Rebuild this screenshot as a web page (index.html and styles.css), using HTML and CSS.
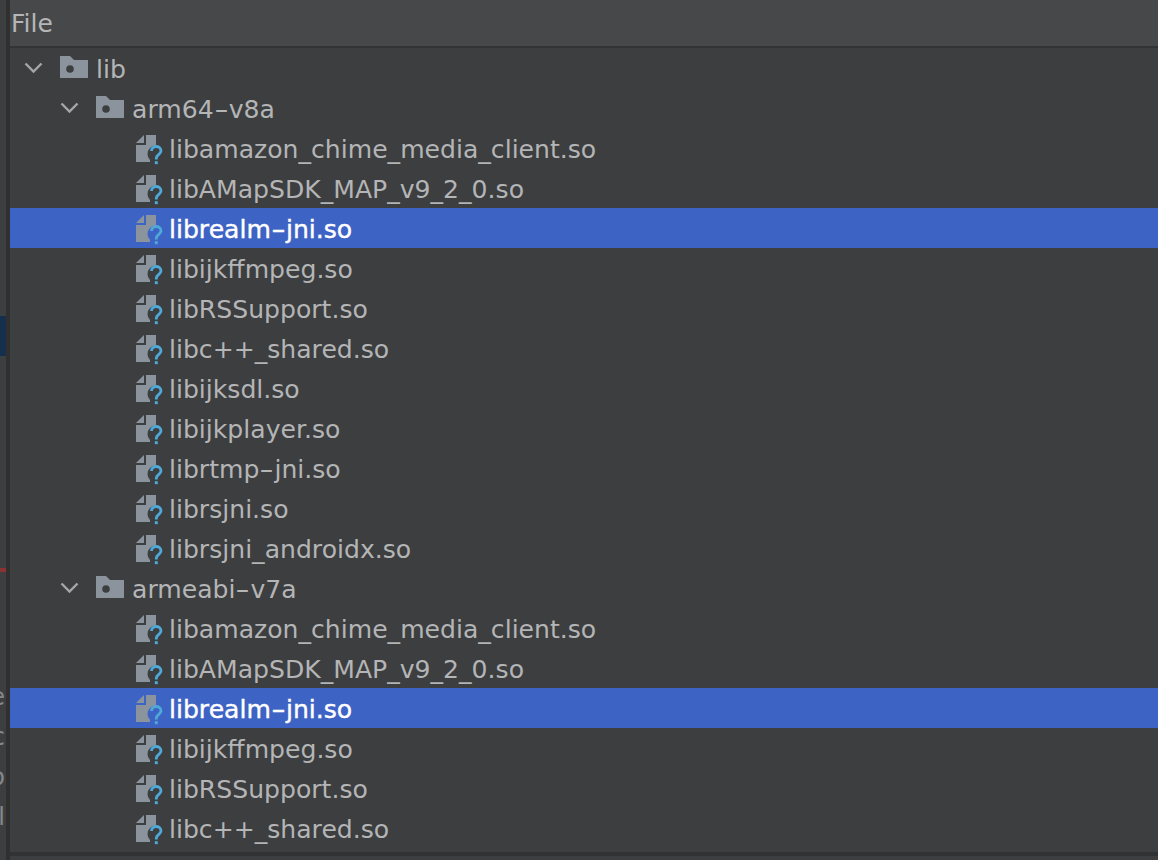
FILE: index.html
```html
<!DOCTYPE html>
<html lang="en">
<head>
<meta charset="utf-8">
<title>File</title>
<link rel="stylesheet" href="styles.css">
</head>
<body>
<svg class="defs" width="0" height="0" aria-hidden="true">
  <defs>
    <symbol id="chev" viewBox="0 0 20 14"><path d="M1.500 2.500 9.500 10.500l8-8" fill="none" stroke="#a4a7a9" stroke-width="2.400"/></symbol>
    <symbol id="folder" viewBox="0 0 28 22"><path d="M0 0h10l4 4h14v18H0z" fill="#8b949d"/><circle cx="10" cy="13" r="3.800" fill="#3d3e40"/></symbol>
    <symbol id="file" viewBox="0 0 28 32">
      <path d="M0 9 8 1v8z" fill="#8b949d"/>
      <path d="M10 1h10v27H0V11h10z" fill="#8b949d"/>
      <circle class="halo" cx="20" cy="20" r="8.500"/>
      <path class="halo" d="M14 24h12v8H14z"/>
      <path d="M15.500 17c0-6 9.500-6 9.500 0 0 3.500-4.700 3.500-4.700 7.500v1" fill="none" stroke="#4ea8d8" stroke-width="2.800"/>
      <path d="M18.800 27.200h3v3h-3z" fill="#4ea8d8"/>
    </symbol>
  </defs>
</svg>
<div class="app">
  <aside class="strip">
    <div class="mark-blue"></div>
    <div class="mark-red"></div>
    <div class="frags">
      <div class="frag">e</div>
      <div class="frag">c</div>
      <div class="frag">o</div>
      <div class="frag">pl</div>
    </div>
  </aside>
  <main class="panel">
    <header class="head">File</header>
    <ul class="tree">
      <li class="row d0"><svg class="chev"><use href="#chev"/></svg><svg class="folder"><use href="#folder"/></svg><span class="name">lib</span></li>
      <li class="row d1"><svg class="chev"><use href="#chev"/></svg><svg class="folder"><use href="#folder"/></svg><span class="name">arm64<span class="hy">-</span>v8a</span></li>
      <li class="row d2"><svg class="file"><use href="#file"/></svg><span class="name">libamazon_chime_media_client.so</span></li>
      <li class="row d2"><svg class="file"><use href="#file"/></svg><span class="name">libAMapSDK_MAP_v9_2_0.so</span></li>
      <li class="row d2 sel"><svg class="file"><use href="#file"/></svg><span class="name">librealm<span class="hy">-</span>jni.so</span></li>
      <li class="row d2"><svg class="file"><use href="#file"/></svg><span class="name">libijkffmpeg.so</span></li>
      <li class="row d2"><svg class="file"><use href="#file"/></svg><span class="name">libRSSupport.so</span></li>
      <li class="row d2"><svg class="file"><use href="#file"/></svg><span class="name">libc++_shared.so</span></li>
      <li class="row d2"><svg class="file"><use href="#file"/></svg><span class="name">libijksdl.so</span></li>
      <li class="row d2"><svg class="file"><use href="#file"/></svg><span class="name">libijkplayer.so</span></li>
      <li class="row d2"><svg class="file"><use href="#file"/></svg><span class="name">librtmp<span class="hy">-</span>jni.so</span></li>
      <li class="row d2"><svg class="file"><use href="#file"/></svg><span class="name">librsjni.so</span></li>
      <li class="row d2"><svg class="file"><use href="#file"/></svg><span class="name">librsjni_androidx.so</span></li>
      <li class="row d1"><svg class="chev"><use href="#chev"/></svg><svg class="folder"><use href="#folder"/></svg><span class="name">armeabi<span class="hy">-</span>v7a</span></li>
      <li class="row d2"><svg class="file"><use href="#file"/></svg><span class="name">libamazon_chime_media_client.so</span></li>
      <li class="row d2"><svg class="file"><use href="#file"/></svg><span class="name">libAMapSDK_MAP_v9_2_0.so</span></li>
      <li class="row d2 sel"><svg class="file"><use href="#file"/></svg><span class="name">librealm<span class="hy">-</span>jni.so</span></li>
      <li class="row d2"><svg class="file"><use href="#file"/></svg><span class="name">libijkffmpeg.so</span></li>
      <li class="row d2"><svg class="file"><use href="#file"/></svg><span class="name">libRSSupport.so</span></li>
      <li class="row d2"><svg class="file"><use href="#file"/></svg><span class="name">libc++_shared.so</span></li>
    </ul>
    <div class="foot"></div>
  </main>
</div>
</body>
</html>
```
FILE: styles.css
```css
* { box-sizing: border-box; }
html, body { margin: 0; height: 100%; overflow: hidden; }
body { background: #3d3e40; font-family: "DejaVu Sans", sans-serif; color: #b4b5b6; }
.defs { position: absolute; }
.app { display: flex; height: 860px; }

.strip { width: 6px; flex: none; overflow: hidden; background: #3d3e40; color: #85878a; font-size: 24px; }
.mark-blue { height: 40px; margin-top: 316px; background: #14304d; }
.mark-red { height: 4px; margin-top: 212px; background: #8c3232; }
.frags { margin-top: 105px; }
.frag { height: 40px; line-height: 40px; white-space: nowrap; display: flex; justify-content: flex-end; padding-right: 1px; }

.panel { flex: 1; min-width: 0; display: flex; flex-direction: column; border-left: 4px solid #303031; }
.head { height: 48px; padding-left: 1px; background: #47484a; border-bottom: 2px solid #323334; font-size: 25px; line-height: 48px; color: #b4b6b7; }
.tree { list-style: none; margin: 0; padding: 0; height: 804px; overflow: hidden; }
.foot { height: 4px; background: #313233; }

.row { height: 40px; display: flex; align-items: center; font-size: 25.100px; white-space: nowrap; }
.name { display: block; margin-top: 2px; }
.hy { display: inline-block; margin: 0 3px; transform: scaleX(1.600); }
.d0 { padding-left: 14px; }
.d1 { padding-left: 50px; }
.d2 { padding-left: 126px; }
.chev { width: 20px; height: 14px; margin-right: 16px; flex: none; }
.folder { width: 28px; height: 22px; margin-right: 8px; flex: none; margin-top: -2px; }
.file { width: 28px; height: 32px; margin-right: 5px; flex: none; margin-top: 4px; --halo: #3d3e40; }
.halo { fill: var(--halo); }
.sel { background: #3d63c4; color: #ffffff; }
.sel .name { -webkit-text-stroke: 0.4px #ffffff; }
.sel .file { --halo: #3d63c4; }
```
